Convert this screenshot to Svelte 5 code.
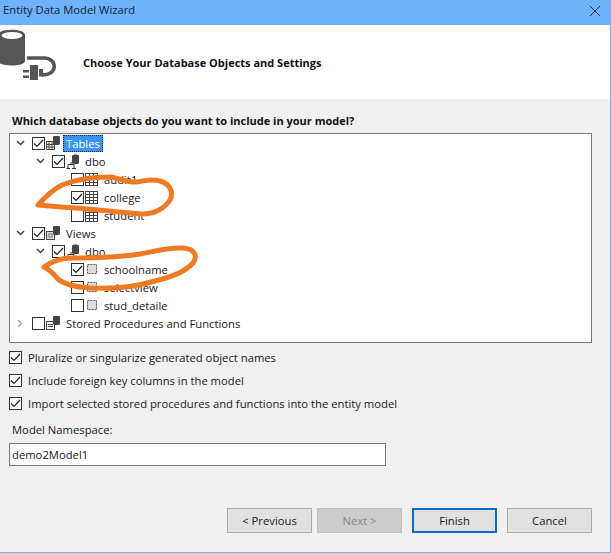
<script>
	const rows = [
		{ label: 'Tables', level: 0, arrow: 'open', checked: true, icon: 'tables', selected: true },
		{ label: 'dbo', level: 1, arrow: 'open', checked: true, icon: 'schema' },
		{ label: 'audit1', level: 2, checked: false, icon: 'table' },
		{ label: 'college', level: 2, checked: true, icon: 'table' },
		{ label: 'student', level: 2, checked: false, icon: 'table' },
		{ label: 'Views', level: 0, arrow: 'open', checked: true, icon: 'views' },
		{ label: 'dbo', level: 1, arrow: 'open', checked: true, icon: 'schema' },
		{ label: 'schoolname', level: 2, checked: true, icon: 'view' },
		{ label: 'selectview', level: 2, checked: false, icon: 'view' },
		{ label: 'stud_detaile', level: 2, checked: false, icon: 'view' },
		{ label: 'Stored Procedures and Functions', level: 0, arrow: 'closed', checked: false, icon: 'procs' }
	];

	const options = [
		'Pluralize or singularize generated object names',
		'Include foreign key columns in the model',
		'Import selected stored procedures and functions into the entity model'
	];
</script>

{#snippet can(x, y)}
	<path d="M{x} {y + 1}c0-2 7-2 7 0v7c0 1.500-7 1.500-7 0z" fill="#444" />
{/snippet}

{#snippet check(on)}
	<span class="check">
		{#if on}
			<svg width="11" height="9" viewBox="0 0 11 9"><path d="M1 4.500 4 7.500 10 1" fill="none" stroke="#222" stroke-width="1.200" /></svg>
		{/if}
	</span>
{/snippet}

<div class="window">
	<div class="titlebar">
		<span>Entity Data Model Wizard</span>
		<svg class="close" width="12" height="12" viewBox="0 0 12 12"><path d="M1 1 11 11M11 1 1 11" stroke="#1a2433" stroke-width="1" /></svg>
	</div>

	<header class="banner">
		<svg class="logo" width="58" height="58" viewBox="0 0 58 58">
			<path d="M-2 10C-2 3 25 3 25 10V36C25 42 -2 42 -2 36Z" fill="#555" />
			<ellipse cx="12" cy="10.500" rx="10.500" ry="3.500" fill="#fff" />
			<path d="M27 33H44C57 33 59 50 42 50" fill="none" stroke="#555" stroke-width="3.500" />
			<path d="M30 40H38V55H30ZM23 45H29V47.500H23ZM23 50.500H29V53H23ZM39 44H43V51.500H39Z" fill="#555" />
		</svg>
		<h1>Choose Your Database Objects and Settings</h1>
	</header>

	<main class="body">
		<h2>Which database objects do you want to include in your model?</h2>

		<div class="tree">
			{#each rows as row}
				<div class="row level-{row.level}">
					<span class="arrow">
						{#if row.arrow === 'open'}
							<svg width="9" height="6" viewBox="0 0 9 6"><path d="M1 1 4.500 4.500 8 1" fill="none" stroke="#444" stroke-width="1.500" /></svg>
						{:else if row.arrow === 'closed'}
							<svg width="6" height="9" viewBox="0 0 6 9"><path d="M1 1 4.500 4.500 1 8" fill="none" stroke="#aaa" stroke-width="1.500" /></svg>
						{/if}
					</span>
					{@render check(row.checked)}
					<svg class="icon" width="18" height="15" viewBox="0 0 18 15">
						{#if row.icon === 'table'}
							<g transform="translate(0 1)">
								<rect x="0.500" y="0.500" width="12" height="12" fill="#fff" stroke="#444" />
								<path d="M0 3.500H13M0 6.500H13M0 9.500H13M4.500 1V13M8.500 1V13" stroke="#444" />
							</g>
						{:else if row.icon === 'view'}
							<rect x="2.500" y="2.500" width="9" height="9" fill="#ddd" stroke="#555" stroke-dasharray="2 1" />
						{:else if row.icon === 'schema'}
							<path d="M0.500 14.500H4M6 14.500H10M2 14V10.500H8V14M5 10.500V8" fill="none" stroke="#333" />
							{@render can(6, 1)}
						{:else}
							{#if row.icon === 'tables'}
								<rect x="0.500" y="5.500" width="8" height="8" fill="#fff" stroke="#444" />
								<path d="M0 8.500H9M0 11H9M3 6V14M6 6V14" stroke="#444" />
							{:else if row.icon === 'views'}
								<rect x="0.500" y="5.500" width="8" height="8" fill="#ddd" stroke="#444" />
								<rect x="3" y="8" width="3" height="3" fill="#fff" stroke="#666" />
							{:else}
								<rect x="0.500" y="5.500" width="8" height="8" fill="#fff" stroke="#444" />
								<path d="M2 8.500H7M2 10.500H7" stroke="#444" />
							{/if}
							{@render can(7, 0)}
						{/if}
					</svg>
					<span class="label" class:selected={row.selected}>{row.label}</span>
				</div>
			{/each}
		</div>

		<div class="options">
			{#each options as option}
				<label class="option">
					{@render check(true)}
					<span>{option}</span>
				</label>
			{/each}
		</div>

		<label class="namespace" for="ns">Model Namespace:</label>
		<input id="ns" value="demo2Model1" />

		<footer class="buttons">
			<button class="previous">&lt; Previous</button>
			<button class="disabled" disabled>Next &gt;</button>
			<button class="primary">Finish</button>
			<button>Cancel</button>
		</footer>
	</main>

	<!-- hand-drawn marker circles over the tree -->
	<svg class="scribble" width="611" height="553" viewBox="0 0 611 553">
		<path d="M38 205C45 197 52 190 62 185 72 181 90 177 110 177 120 178 128 183 136 182 145 181 152 178 160 181 170 184 174 192 170 200 165 208 155 214 142 214 120 213 95 209 75 208 60 207 48 206 38 205Z" />
		<path d="M44 267C52 261 60 258 72 258 95 258 120 257 140 254 155 251 170 247 183 248 195 249 198 256 193 263 185 272 172 277 155 281 135 287 110 289 90 288 75 287 65 285 58 279 54 274 50 270 44 267Z" />
	</svg>
</div>

<style>
	:global(body) {
		margin: 0;
	}

	.window {
		position: relative;
		display: flex;
		flex-direction: column;
		width: 611px;
		height: 553px;
		box-sizing: border-box;
		border-right: 1px solid #6db2fb;
		border-bottom: 1px solid #6db2fb;
		background: #f0f0f0;
		font-family: "Open Sans", "Noto Sans", sans-serif;
		font-size: 11.25px;
		color: #1a1a1a;
		overflow: hidden;
	}

	.titlebar {
		display: flex;
		align-items: center;
		justify-content: space-between;
		flex: 0 0 25px;
		margin-right: -1px;
		padding: 0 10px 7px 3px;
		box-sizing: border-box;
		background: #6db2fb;
		color: #16202e;
		font-size: 11.25px;
	}

	.close {
		margin-top: 3px;
	}

	.banner {
		display: flex;
		align-items: center;
		flex: 0 0 74px;
		background: #fff;
	}

	.logo {
		flex: none;
		align-self: flex-start;
	}

	h1 {
		margin: 0 0 0 25px;
		font-size: 11px;
		font-weight: 700;
		color: #111;
	}

	.body {
		display: flex;
		flex-direction: column;
		flex: 1;
		padding: 14px 18px 0 9px;
	}

	h2 {
		margin: 0 0 4px 3px;
		font-size: 11px;
		line-height: 16px;
		font-weight: 700;
		color: #111;
	}

	.tree {
		height: 210px;
		box-sizing: border-box;
		border: 1px solid #7a7a7a;
		background: #fff;
	}

	.row {
		display: flex;
		align-items: center;
		height: 18px;
	}

	.level-0 {
		padding-left: 5px;
	}

	.level-1 {
		padding-left: 25px;
	}

	.level-2 {
		padding-left: 44px;
	}

	.arrow {
		display: flex;
		align-items: center;
		justify-content: center;
		flex: 0 0 17px;
		box-sizing: border-box;
		padding-right: 7px;
	}

	.level-2 .arrow {
		visibility: hidden;
	}

	.check {
		display: flex;
		align-items: center;
		justify-content: center;
		flex: none;
		width: 11px;
		height: 11px;
		border: 1px solid #333;
		background: #fff;
	}

	.icon {
		flex: none;
		margin-left: 1px;
	}

	.label {
		padding: 0 2px;
		line-height: 17px;
		margin-left: -1px;
	}

	.level-0 .label {
		padding: 0 3px;
	}

	.selected {
		background: #3a96f5;
		color: #fff;
		outline: 1px dotted #123;
		outline-offset: -1px;
	}

	.options {
		display: flex;
		flex-direction: column;
		gap: 4px;
		margin-top: 5px;
	}

	.option {
		display: flex;
		align-items: center;
		gap: 6px;
		height: 19px;
	}

	.namespace {
		margin: 9px 0 0 3px;
		line-height: 16px;
	}

	input {
		width: 377px;
		height: 23px;
		margin-top: 5px;
		padding: 0 2px;
		box-sizing: border-box;
		border: 1px solid #7a7a7a;
		background: #fff;
		font: inherit;
		color: inherit;
		outline: none;
	}

	.buttons {
		display: flex;
		justify-content: flex-end;
		gap: 10px;
		margin-top: 42px;
	}

	button {
		width: 85px;
		height: 25px;
		padding: 0;
		box-sizing: border-box;
		border: 1px solid #adadad;
		background: #e1e1e1;
		font: inherit;
		color: #1a1a1a;
	}

	.previous {
		margin-right: -5px;
	}

	.disabled {
		border-color: #bfbfbf;
		background: #ccc;
		color: #8a8a8a;
	}

	.primary {
		border: 2px solid #0a6cc4;
	}

	.scribble {
		position: absolute;
		top: 0;
		left: 0;
		pointer-events: none;
	}

	.scribble path {
		fill: none;
		stroke: #f07a22;
		stroke-width: 5;
		stroke-linejoin: round;
		stroke-linecap: round;
	}
</style>
